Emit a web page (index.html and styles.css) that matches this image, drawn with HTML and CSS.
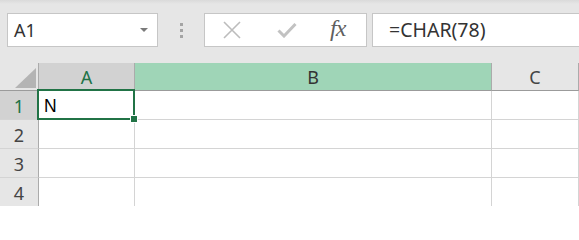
FILE: index.html
```html
<!DOCTYPE html>
<html>
<head>
<meta charset="utf-8">
<link rel="stylesheet" href="styles.css">
</head>
<body>
<div class="toolbar">
  <div class="namebox">
    <span class="name">A1</span>
    <span class="drop"></span>
  </div>
  <div class="grip"><i></i><i></i><i></i></div>
  <div class="fbuttons">
    <svg class="ic-x" width="18" height="18" viewBox="0 0 18 18"><path d="M1 1 L17 17 M17 1 L1 17" stroke="#bcbcbc" stroke-width="1.6" fill="none"/></svg>
    <svg class="ic-ok" width="20" height="16" viewBox="0 0 20 16"><path d="M1.5 8.5 L7 14 L18.5 2" stroke="#c2c2c2" stroke-width="3" fill="none"/></svg>
    <span class="fx">fx</span>
  </div>
  <div class="formula">=CHAR(78)</div>
</div>
<div class="sheet">
  <div class="hd corner"><span class="tri"></span></div>
  <div class="hd col sel">A</div>
  <div class="hd col colsel">B</div>
  <div class="hd col">C</div>

  <div class="hd row sel">1</div>
  <div class="cell a1">N<span class="selbox"><span class="handle"></span></span></div>
  <div class="cell"></div>
  <div class="cell"></div>

  <div class="hd row">2</div>
  <div class="cell"></div>
  <div class="cell"></div>
  <div class="cell"></div>

  <div class="hd row">3</div>
  <div class="cell"></div>
  <div class="cell"></div>
  <div class="cell"></div>

  <div class="hd row">4</div>
  <div class="cell"></div>
  <div class="cell"></div>
  <div class="cell"></div>
</div>
</body>
</html>
```
FILE: styles.css
```css
html, body {
  margin: 0;
  padding: 0;
  background: #fff;
  overflow: hidden;
}
body {
  width: 579px;
  height: 206px;
  font-family: "Noto Sans", "Open Sans", sans-serif;
}
.toolbar {
  height: 63px;
  box-sizing: border-box;
  padding: 13px 0 0 7px;
  display: flex;
  align-items: flex-start;
  background: linear-gradient(#dadada 0px, #e6e6e6 4px, #e6e6e6 100%);
}
.namebox {
  width: 151px;
  height: 34px;
  box-sizing: border-box;
  border: 1px solid #c6c6c6;
  background: #fff;
  display: flex;
  align-items: center;
  padding-left: 6px;
  position: relative;
}
.name {
  font-size: 18px;
  color: #333;
  flex: 1;
}
.drop {
  width: 0;
  height: 0;
  border-left: 4px solid transparent;
  border-right: 4px solid transparent;
  border-top: 4px solid #7a7a7a;
  margin-right: 9px;
}
.grip {
  width: 46px;
  height: 34px;
  display: flex;
  flex-direction: column;
  align-items: center;
  justify-content: center;
  gap: 3px;
}
.grip i {
  display: block;
  width: 3px;
  height: 3px;
  background: #a4a4a4;
}
.fbuttons {
  width: 163px;
  height: 34px;
  box-sizing: border-box;
  border: 1px solid #c6c6c6;
  background: #fff;
  display: flex;
  align-items: center;
  padding-left: 18px;
}
.ic-x { margin-right: 36px; }
.ic-ok { margin-right: 33px; }
.fx {
  font-family: "Liberation Serif", serif;
  font-style: italic;
  font-size: 24px;
  color: #5f5f5f;
  letter-spacing: -1px;
  margin-top: -3px;
}
.formula {
  margin-left: 5px;
  flex: 1;
  height: 34px;
  box-sizing: border-box;
  border: 1px solid #c6c6c6;
  border-right: none;
  background: #fff;
  padding-left: 16px;
  font-size: 19.5px;
  line-height: 31px;
  color: #333;
}
.sheet {
  display: grid;
  grid-template-columns: 39px 96px 357px 1fr;
  grid-template-rows: 28px 29px 29px 29px 29px;
  background: #fff;
}
.hd {
  background: #e6e6e6;
  color: #444;
  font-size: 18px;
  display: flex;
  align-items: center;
  justify-content: center;
  box-sizing: border-box;
}
.col {
  border-right: 1px solid #ababab;
  border-bottom: 1px solid #9b9b9b;
  padding-top: 1px;
}
.corner {
  border-right: 1px solid #ababab;
  border-bottom: 1px solid #9b9b9b;
  position: relative;
}
.tri {
  position: absolute;
  right: 2px;
  bottom: 2px;
  width: 0;
  height: 0;
  border-left: 21px solid transparent;
  border-bottom: 20px solid #b4b4b4;
}
.row {
  border-right: 1px solid #ababab;
  border-bottom: 1px solid #d4d4d4;
  padding-top: 2px;
}
.hd.sel {
  background: #d2d2d2;
  color: #217346;
}
.hd.colsel {
  background: #9fd5b7;
  color: #333;
}
.cell {
  box-sizing: border-box;
  border-right: 1px solid #d4d4d4;
  border-bottom: 1px solid #d4d4d4;
  background: #fff;
}
.a1 {
  position: relative;
  font-family: "Liberation Sans", Arial, sans-serif;
  font-size: 17.5px;
  color: #000;
  padding: 5px 0 0 5px;
}
.selbox {
  position: absolute;
  left: -2px;
  top: -2px;
  width: 98px;
  height: 31px;
  border: 2px solid #217346;
  box-sizing: border-box;
}
.handle {
  position: absolute;
  right: -5px;
  bottom: -5px;
  width: 6px;
  height: 6px;
  background: #217346;
  border: 1px solid #fff;
}
```
